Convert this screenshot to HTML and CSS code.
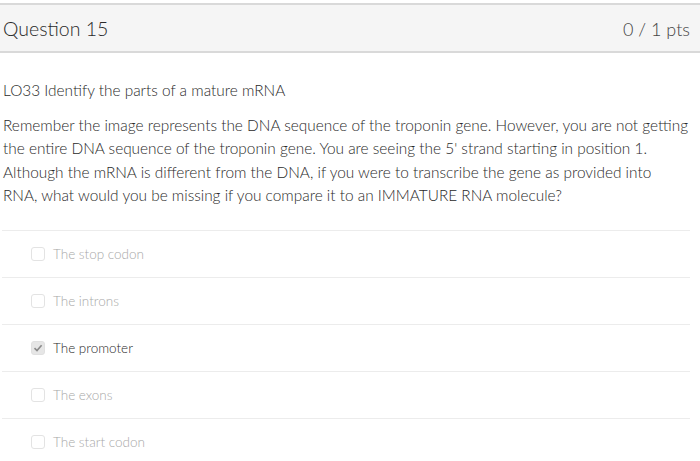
FILE: index.html
```html
<!DOCTYPE html>
<html>
<head>
<meta charset="utf-8">
<link rel="stylesheet" href="styles.css">
</head>
<body>
<div class="question">
  <div class="header">
    <span class="title">Question 15</span>
    <span class="pts">0 / 1 pts</span>
  </div>
  <div class="content">
    <p class="lo">LO33 Identify the parts of a mature mRNA</p>
    <p class="text">Remember the image represents the DNA sequence of the troponin gene. However, you are not getting the entire DNA sequence of the troponin gene. You are seeing the 5' strand starting in position 1. Although the mRNA is different from the DNA, if you were to transcribe the gene as provided into<br>RNA, what would you be missing if you compare it to an IMMATURE RNA molecule?</p>
  </div>
  <div class="answers">
    <div class="answer"><span class="box"></span><span class="label">The stop codon</span></div>
    <div class="answer"><span class="box"></span><span class="label">The introns</span></div>
    <div class="answer selected"><span class="box checked"><svg width="10" height="10" viewBox="0 0 10 10"><path d="M1.5 5.2 L4 7.6 L8.6 2.2" fill="none" stroke="#8a8a8a" stroke-width="1.6"/></svg></span><span class="label">The promoter</span></div>
    <div class="answer"><span class="box"></span><span class="label">The exons</span></div>
    <div class="answer"><span class="box"></span><span class="label">The start codon</span></div>
  </div>
</div>
</body>
</html>
```
FILE: styles.css
```css
html, body {
  margin: 0;
  padding: 0;
  background: #fff;
  font-family: Lato, "Liberation Sans", sans-serif;
  font-weight: 300;
  color: #2d3b45;
}
.question {
  width: 700px;
  overflow: hidden;
}
.header {
  margin-top: 3px;
  border-top: 2px solid #d9d9d9;
  border-bottom: 2px solid #d9d9d9;
  background: #f5f5f5;
  height: 45px;
  display: flex;
  align-items: center;
  justify-content: space-between;
  padding: 1px 10px 0 3px;
  color: #2a2a2a;
}
.title {
  font-size: 19.5px;
  font-weight: 300;
}
.pts {
  font-size: 18px;
  font-weight: 300;
  color: #444;
}
.content {
  padding: 0 6px 0 3px;
}
.lo {
  margin: 27px 0 0;
  font-size: 15.4px;
  line-height: 20px;
  color: #2a2a2a;
}
.text {
  margin: 14px 0 0;
  font-size: 15.4px;
  line-height: 23.3px;
  color: #2a2a2a;
}
.answers {
  margin-top: 23px;
  padding: 0 10px 0 2px;
}
.answer {
  border-top: 1px solid #ececec;
  height: 46px;
  display: flex;
  align-items: center;
  padding-left: 29px;
}
.box {
  width: 12px;
  height: 12px;
  border: 1px solid #e3e3e3;
  border-radius: 3px;
  margin-right: 8px;
  display: flex;
  align-items: center;
  justify-content: center;
  flex: none;
}
.box.checked {
  background: #e6e6e6;
  border-color: #e0e0e0;
}
.label {
  font-size: 13.5px;
  color: #a8a8a8;
}
.selected .label {
  color: #2a2a2a;
}
```
